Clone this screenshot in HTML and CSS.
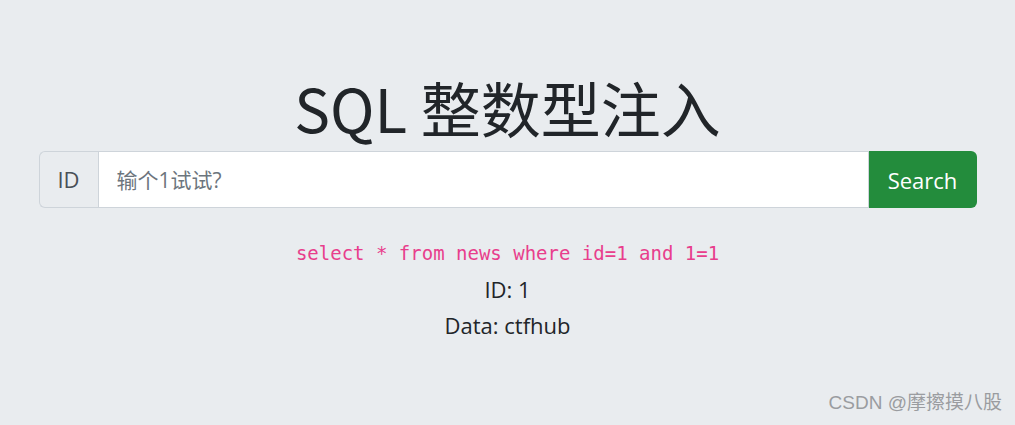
FILE: index.html
```html
<!DOCTYPE html>
<html lang="zh">
<head>
<meta charset="utf-8">
<title>SQL 整数型注入</title>
<link rel="stylesheet" href="styles.css">
</head>
<body>
<main class="jumbotron">
  <div class="container">
    <h1 class="title">SQL 整数型注入</h1>
    <form class="input-group">
      <span class="prepend">ID</span>
      <input class="field" type="text" placeholder="输个1试试?">
      <button class="btn" type="button">Search</button>
    </form>
    <div class="result">
      <code class="query">select * from news where id=1 and 1=1</code>
      <div class="row">ID: 1</div>
      <div class="row">Data: ctfhub</div>
    </div>
  </div>
</main>
<div class="watermark">CSDN @摩擦摸八股</div>
</body>
</html>
```
FILE: styles.css
```css
html, body {
  margin: 0;
  padding: 0;
}
body {
  background: #e9ecef;
  color: #212529;
  font-family: "Open Sans", "Noto Sans CJK SC", sans-serif;
  font-size: 22px;
  line-height: 1.5;
  width: 1015px;
  height: 425px;
  overflow: hidden;
  position: relative;
}
.jumbotron {
  padding-top: 67px;
}
.container {
  width: 938px;
  margin: 0 auto;
}
.title {
  margin: 0 0 4px;
  text-align: center;
  font-size: 60px;
  font-weight: 400;
  line-height: 80px;
  font-family: "Noto Sans CJK SC", sans-serif;
}
.input-group {
  display: flex;
  height: 57px;
  margin: 0;
}
.prepend {
  display: flex;
  align-items: center;
  justify-content: center;
  width: 58px;
  border: 1px solid #ced4da;
  border-right: none;
  border-radius: 6px 0 0 6px;
  background: #e9ecef;
  color: #495057;
  font-size: 22px;
}
.field {
  flex: 1;
  min-width: 0;
  border: 1px solid #ced4da;
  border-radius: 0;
  padding: 0 18px;
  font-family: "Open Sans", "Noto Sans CJK SC", sans-serif;
  font-size: 21px;
  color: #495057;
  background: #fff;
  outline: none;
}
.field::placeholder {
  color: #6c757d;
}
.btn {
  width: 108px;
  border: none;
  border-radius: 0 6px 6px 0;
  background: #238c3c;
  color: #fff;
  font-family: "Open Sans", "Noto Sans CJK SC", sans-serif;
  font-size: 22px;
  padding: 0;
}
.result {
  margin-top: 30px;
  display: flex;
  flex-direction: column;
  align-items: center;
}
.query {
  font-family: "DejaVu Sans Mono", "Liberation Mono", monospace;
  font-size: 19px;
  color: #e83e8c;
  line-height: 30px;
  margin-bottom: 3px;
}
.row {
  line-height: 36px;
}
.watermark {
  position: absolute;
  right: 13px;
  bottom: 8px;
  font-family: "Liberation Sans", "Noto Sans CJK SC", sans-serif;
  font-size: 19px;
  color: #9a9ca0;
}
```
